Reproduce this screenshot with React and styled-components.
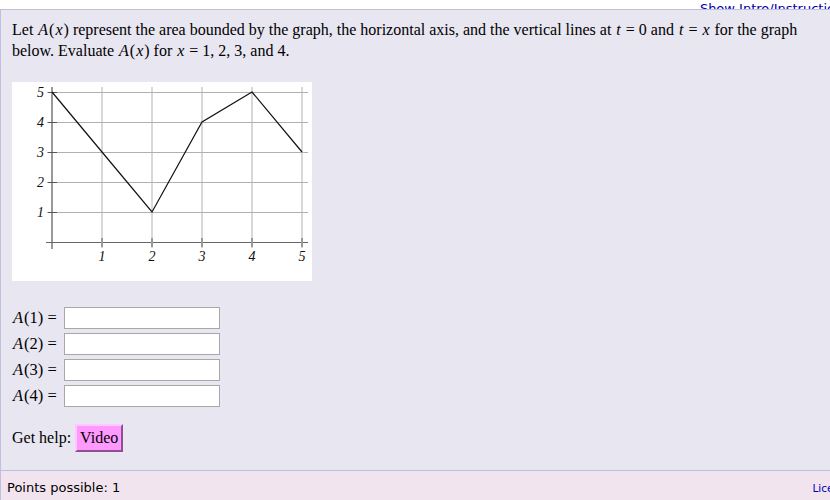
import React from "react";
import styled, { createGlobalStyle } from "styled-components";

const GlobalStyle = createGlobalStyle`
  html, body {
    margin: 0;
    padding: 0;
    background: #ffffff;
    overflow: hidden;
  }
`;

const Page = styled.div`
  width: 880px;
  font-family: "Liberation Serif", "Times New Roman", serif;
  color: #000;
`;

const TopBar = styled.div`
  height: 9px;
  overflow: hidden;
  display: flex;
  justify-content: flex-end;
  align-items: flex-end;
  padding-right: 30px;
`;

const TopLink = styled.a`
  font-family: "DejaVu Sans", Verdana, sans-serif;
  font-size: 13px;
  line-height: 13px;
  color: #0000b0;
  text-decoration: none;
  margin-bottom: -6px;
`;

const Question = styled.div`
  background: #e8e6f1;
  border-top: 1px solid #c0c0dc;
  border-left: 1px solid #c0c0dc;
  padding: 9px 11px 18px;
`;

const Prompt = styled.p`
  margin: 0;
  font-size: 16px;
  line-height: 21px;
  width: 800px;
`;

const M = styled.i`
  font-style: italic;
  padding: 0 1px;
`;

const GraphBox = styled.div`
  width: 300px;
  height: 199px;
  background: #ffffff;
  margin-top: 21px;
`;

const Answers = styled.div`
  margin-top: 26px;
  display: flex;
  flex-direction: column;
  gap: 4px;
`;

const AnswerRow = styled.div`
  display: flex;
  align-items: center;
  gap: 4px;
  height: 22px;
  font-size: 16.5px;
  line-height: 22px;
`;

const Label = styled.span`
  width: 48px;
  white-space: nowrap;
`;

const Box = styled.div`
  width: 154px;
  height: 20px;
  background: #ffffff;
  border: 1px solid #a8a8a8;
`;

const Help = styled.div`
  margin-top: 17px;
  display: flex;
  align-items: center;
  gap: 4px;
  font-size: 16px;
`;

const VideoButton = styled.span`
  display: inline-block;
  background: #ff99ff;
  border: 2px solid;
  border-top-color: #ffc8ff;
  border-left-color: #ffc8ff;
  border-right-color: #905090;
  border-bottom-color: #905090;
  padding: 3px 3px 3px 3px;
  line-height: 18px;
`;

const Footer = styled.div`
  background: #f1e4ee;
  border-top: 1px solid #b8c0e0;
  border-left: 1px solid #c0c0dc;
  padding: 7px 28px 0 6px;
  font-family: "DejaVu Sans", Verdana, sans-serif;
  font-size: 13px;
  line-height: 19px;
`;

const FooterRow = styled.div`
  display: flex;
  justify-content: space-between;
  align-items: flex-start;
`;

const License = styled.span`
  font-size: 10.5px;
  color: #0000b0;
  margin-top: 1px;
`;

const xs = (v) => 40 + v * 50;
const ys = (v) => 160 - v * 30;
const pts = [
  [0, 5],
  [1, 3],
  [2, 1],
  [3, 4],
  [4, 5],
  [5, 3],
];

const Graph = () => (
  <svg width="300" height="199" viewBox="0 0 300 199">
    {[1, 2, 3, 4, 5].map((k) => (
      <line
        key={"v" + k}
        x1={xs(k)}
        y1={5}
        x2={xs(k)}
        y2={166}
        stroke="#d8d8d8"
        strokeWidth="2"
      />
    ))}
    {[1, 2, 3, 4, 5].map((k) => (
      <line
        key={"h" + k}
        x1={35}
        y1={ys(k) + 0.5}
        x2={296}
        y2={ys(k) + 0.5}
        stroke="#b0b0b0"
        strokeWidth="1"
      />
    ))}
    <line x1={40} y1={5} x2={40} y2={167} stroke="#999" strokeWidth="2" />
    <line x1={34} y1={160.5} x2={296} y2={160.5} stroke="#666" strokeWidth="1" />
    {[1, 2, 3, 4, 5].map((k) => (
      <line
        key={"tx" + k}
        x1={xs(k)}
        y1={156}
        x2={xs(k)}
        y2={165}
        stroke="#999"
        strokeWidth="2"
      />
    ))}
    {[1, 2, 3, 4, 5].map((k) => (
      <line
        key={"ty" + k}
        x1={36}
        y1={ys(k) + 0.5}
        x2={45}
        y2={ys(k) + 0.5}
        stroke="#555"
        strokeWidth="1"
      />
    ))}
    <polyline
      points={pts.map(([x, y]) => `${xs(x)},${ys(y)}`).join(" ")}
      fill="none"
      stroke="#111"
      strokeWidth="1.2"
    />
    <g
      fontFamily="'Liberation Serif', serif"
      fontStyle="italic"
      fontSize="14"
      fill="#111"
    >
      {[1, 2, 3, 4, 5].map((k) => (
        <text key={"yl" + k} x={32} y={ys(k) + 5} textAnchor="end">
          {k}
        </text>
      ))}
      {[1, 2, 3, 4, 5].map((k) => (
        <text key={"xl" + k} x={xs(k)} y={179} textAnchor="middle">
          {k}
        </text>
      ))}
    </g>
  </svg>
);

export default function App() {
  return (
    <Page>
      <GlobalStyle />
      <TopBar>
        <TopLink>Show Intro/Instructions</TopLink>
      </TopBar>
      <Question>
        <Prompt>
          Let <M>A</M>(<M>x</M>) represent the area bounded by the graph, the
          horizontal axis, and the vertical lines at <M>t</M> = 0 and{" "}
          <M>t</M> = <M>x</M> for the graph below. Evaluate <M>A</M>(<M>x</M>)
          for <M>x</M> = 1, 2, 3, and 4.
        </Prompt>
        <GraphBox>
          <Graph />
        </GraphBox>
        <Answers>
          {[1, 2, 3, 4].map((n) => (
            <AnswerRow key={n}>
              <Label>
                <M>A</M>({n}) =
              </Label>
              <Box />
            </AnswerRow>
          ))}
        </Answers>
        <Help>
          Get help:
          <VideoButton>Video</VideoButton>
        </Help>
      </Question>
      <Footer>
        <FooterRow>
          <span>Points possible: 1</span>
          <License>License</License>
        </FooterRow>
        <div>This is attempt 1 of 3.</div>
      </Footer>
    </Page>
  );
}
